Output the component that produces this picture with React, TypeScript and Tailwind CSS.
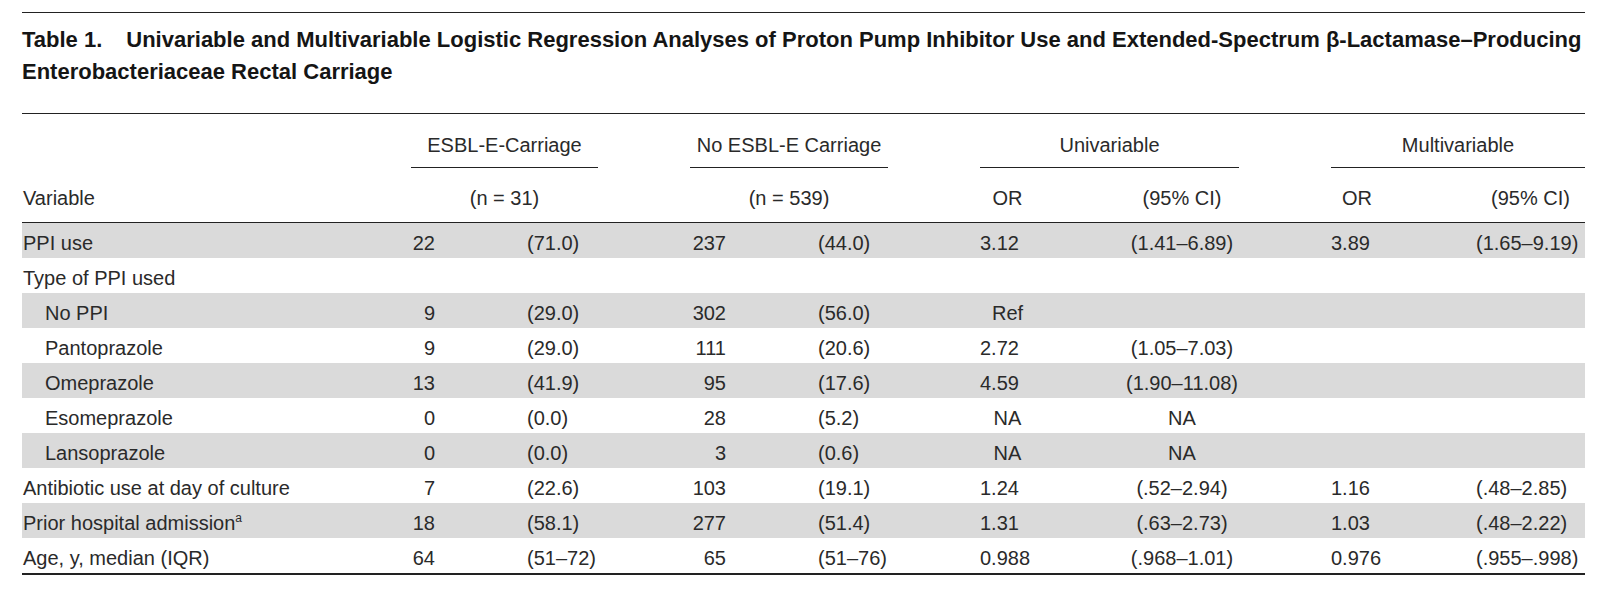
import React from "react";

const COLS =
  "grid grid-cols-[389px_24px_163px_92px_36px_162px_92px_55px_90px_114px_92px_52px_93px_109px]";

type Row = {
  label: React.ReactNode;
  indent?: boolean;
  shade?: boolean;
  esN?: string;
  esP?: string;
  noN?: string;
  noP?: string;
  uOr?: string;
  uCi?: string;
  mOr?: string;
  mCi?: string;
};

const rows: Row[] = [
  { label: "PPI use", shade: true, esN: "22", esP: "(71.0)", noN: "237", noP: "(44.0)", uOr: "3.12", uCi: "(1.41–6.89)", mOr: "3.89", mCi: "(1.65–9.19)" },
  { label: "Type of PPI used" },
  { label: "No PPI", indent: true, shade: true, esN: "9", esP: "(29.0)", noN: "302", noP: "(56.0)", uOr: "Ref" },
  { label: "Pantoprazole", indent: true, esN: "9", esP: "(29.0)", noN: "111", noP: "(20.6)", uOr: "2.72", uCi: "(1.05–7.03)" },
  { label: "Omeprazole", indent: true, shade: true, esN: "13", esP: "(41.9)", noN: "95", noP: "(17.6)", uOr: "4.59", uCi: "(1.90–11.08)" },
  { label: "Esomeprazole", indent: true, esN: "0", esP: "(0.0)", noN: "28", noP: "(5.2)", uOr: "NA", uCi: "NA" },
  { label: "Lansoprazole", indent: true, shade: true, esN: "0", esP: "(0.0)", noN: "3", noP: "(0.6)", uOr: "NA", uCi: "NA" },
  { label: "Antibiotic use at day of culture", esN: "7", esP: "(22.6)", noN: "103", noP: "(19.1)", uOr: "1.24", uCi: "(.52–2.94)", mOr: "1.16", mCi: "(.48–2.85)" },
  {
    label: (
      <>
        Prior hospital admission
        <sup className="text-[12px] top-[-8px]">a</sup>
      </>
    ),
    shade: true,
    esN: "18",
    esP: "(58.1)",
    noN: "277",
    noP: "(51.4)",
    uOr: "1.31",
    uCi: "(.63–2.73)",
    mOr: "1.03",
    mCi: "(.48–2.22)",
  },
  { label: "Age, y, median (IQR)", esN: "64", esP: "(51–72)", noN: "65", noP: "(51–76)", uOr: "0.988", uCi: "(.968–1.01)", mOr: "0.976", mCi: "(.955–.998)" },
];

function isWord(v?: string) {
  return v === "NA" || v === "Ref";
}

function BodyRow({ r }: { r: Row }) {
  return (
    <div className={`${COLS} h-[35px] pt-[8px] leading-[24px] ${r.shade ? "bg-[#dadada]" : ""}`}>
      <div className={`whitespace-nowrap ${r.indent ? "pl-[23px]" : "pl-[1px]"}`}>{r.label}</div>
      <div className="text-right whitespace-nowrap">{r.esN}</div>
      <div className="pl-[92px] whitespace-nowrap">{r.esP}</div>
      <div />
      <div className="text-right whitespace-nowrap">{r.noN}</div>
      <div className="pl-[92px] whitespace-nowrap">{r.noP}</div>
      <div />
      <div className={`whitespace-nowrap ${isWord(r.uOr) ? "text-center" : ""}`}>{r.uOr}</div>
      <div />
      <div className="text-center whitespace-nowrap">{r.uCi}</div>
      <div />
      <div className="whitespace-nowrap">{r.mOr}</div>
      <div />
      <div className="whitespace-nowrap">{r.mCi}</div>
    </div>
  );
}

export default function App() {
  return (
    <div
      className="min-h-screen bg-white pt-[12px] pl-[22px] text-[#2a2a2a]"
      style={{ fontFamily: '"Liberation Sans", Arial, Helvetica, sans-serif' }}
    >
      <div className="w-[1563px]">
        <div className="h-px bg-[#222]" />
        <div className="pt-[11px] text-[22px] leading-[32px] font-bold text-[#151515] tracking-[0px] whitespace-nowrap">
          <span>Table 1.</span>
          <span className="inline-block w-[24px]" />
          <span>
            Univariable and Multivariable Logistic Regression Analyses of Proton Pump Inhibitor Use and
            Extended-Spectrum β-Lactamase–Producing
          </span>
          <br />
          <span>Enterobacteriaceae Rectal Carriage</span>
        </div>
        <div className="h-[25px]" />
        <div className="h-px bg-[#222]" />

        <div className="text-[20px] leading-[24px]">
          <div className={`${COLS} h-[54px]`}>
            <div />
            <div className="col-span-2 flex items-end justify-center pb-[10px] border-b border-[#222] whitespace-nowrap">
              ESBL-E-Carriage
            </div>
            <div />
            <div className="col-span-2 flex items-end justify-center pb-[10px] border-b border-[#222] whitespace-nowrap">
              No ESBL-E Carriage
            </div>
            <div />
            <div className="col-span-3 flex items-end justify-center pb-[10px] border-b border-[#222] whitespace-nowrap">
              Univariable
            </div>
            <div />
            <div className="col-span-3 flex items-end justify-center pb-[10px] border-b border-[#222] whitespace-nowrap">
              Multivariable
            </div>
          </div>

          <div className={`${COLS} h-[54px] pt-[18px]`}>
            <div className="pl-[1px]">Variable</div>
            <div className="col-span-2 text-center whitespace-nowrap">(n = 31)</div>
            <div />
            <div className="col-span-2 text-center whitespace-nowrap">(n = 539)</div>
            <div />
            <div className="text-center">OR</div>
            <div />
            <div className="text-center whitespace-nowrap">(95% CI)</div>
            <div />
            <div className="text-center">OR</div>
            <div />
            <div className="text-center whitespace-nowrap">(95% CI)</div>
          </div>
          <div className="h-px bg-[#222]" />

          {rows.map((r, i) => (
            <BodyRow key={i} r={r} />
          ))}
          <div className="h-[2px] bg-[#222]" />
        </div>
      </div>
    </div>
  );
}
